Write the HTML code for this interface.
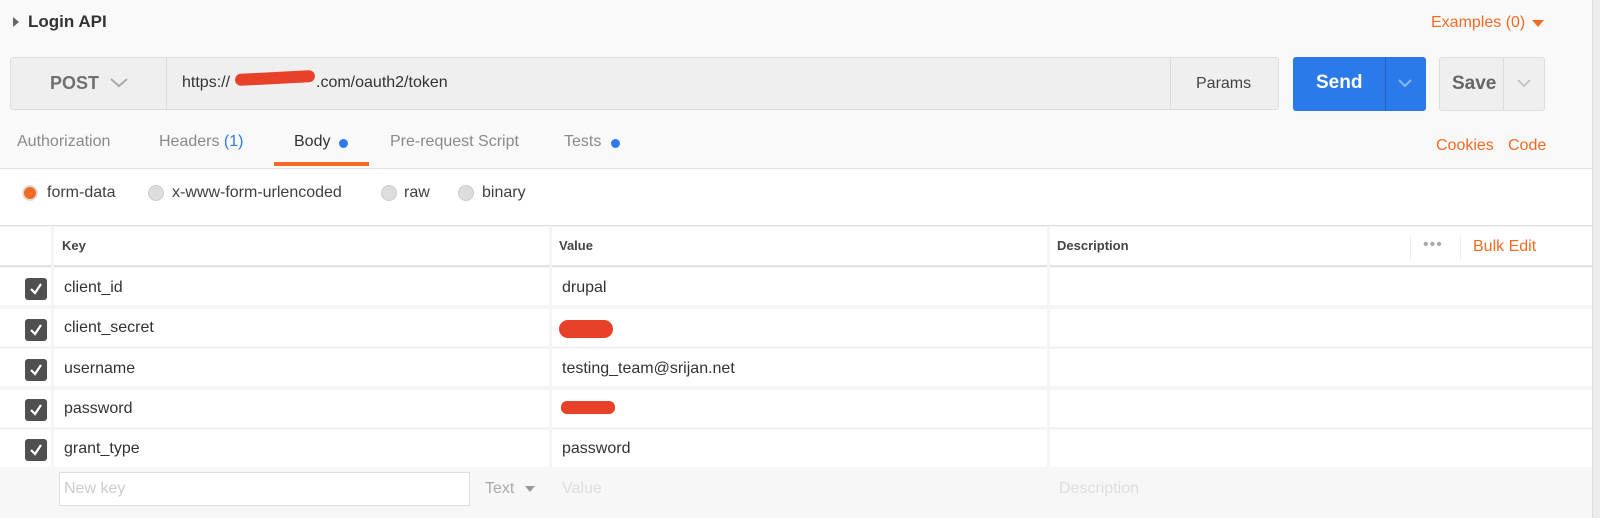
<!DOCTYPE html><html><head><style>
*{box-sizing:border-box;margin:0;padding:0}
body{width:1600px;height:518px;overflow:hidden;background:#f9f9f9;font-family:"Liberation Sans",sans-serif;position:relative;color:#505050}
.a{position:absolute}
.or{color:#f26b24}
.tab{position:absolute;top:133px;font-size:16px;color:#8a8a8a}
.radio{position:absolute;top:185px;width:16px;height:16px;border-radius:50%;background:#ddd;border:1px solid #ccc}
.rl{position:absolute;top:184px;font-size:16px;color:#404040}
.row{position:absolute;left:0;width:1592px;height:37px;background:#fff}
.cb{position:absolute;left:25px;width:22px;height:22px;background:#505050;border-radius:3px}
.cell{position:absolute;font-size:16px;color:#333}
.vs{position:absolute;top:227px;width:3px;height:240px;background:#f5f5f5}
</style></head><body>
<svg class="a" style="left:12px;top:16px" width="8" height="12"><path d="M1 1L7 6L1 11Z" fill="#666"/></svg>
<div class="a" style="left:28px;top:12px;font-size:17px;font-weight:bold;color:#333">Login API</div>
<div class="a or" style="left:1431px;top:14px;font-size:16px">Examples (0)</div>
<svg class="a" style="left:1532px;top:20px" width="12" height="8"><path d="M0 0H12L6 7Z" fill="#f26b24"/></svg>

<div class="a" style="left:10px;top:57px;width:1269px;height:53px;background:#efefef;border:1px solid #ddd;border-radius:3px"></div>
<div class="a" style="left:166px;top:58px;width:1px;height:51px;background:#ddd"></div>
<div class="a" style="left:1170px;top:58px;width:1px;height:51px;background:#ddd"></div>
<div class="a" style="left:50px;top:73px;font-size:18px;font-weight:bold;color:#707070">POST</div>
<svg class="a" style="left:110px;top:78px" width="18" height="10"><path d="M1 1L9 8L17 1" stroke="#aaa" stroke-width="2" fill="none"/></svg>
<div class="a" style="left:182px;top:74px;font-size:16px;color:#333">https://</div>
<div class="a" style="left:235px;top:72px;width:80px;height:12px;background:#e8412a;border-radius:6px;transform:rotate(-3deg)"></div>
<div class="a" style="left:236px;top:74px;font-size:16px;color:#333;padding-left:80px">.com/oauth2/token</div>
<div class="a" style="left:1196px;top:75px;font-size:16px;color:#444">Params</div>

<div class="a" style="left:1293px;top:57px;width:133px;height:54px;background:#2a7ae9;border-radius:3px"></div>
<div class="a" style="left:1385px;top:57px;width:1px;height:54px;background:#1f62c5"></div>
<div class="a" style="left:1316px;top:72px;font-size:19px;font-weight:bold;color:#fff">Send</div>
<svg class="a" style="left:1398px;top:79px" width="14" height="9"><path d="M1 1L7 7L13 1" stroke="#8db8f2" stroke-width="2" fill="none"/></svg>
<div class="a" style="left:1439px;top:57px;width:106px;height:54px;background:#efefef;border:1px solid #ddd;border-radius:3px"></div>
<div class="a" style="left:1503px;top:58px;width:1px;height:52px;background:#ddd"></div>
<div class="a" style="left:1452px;top:73px;font-size:19px;font-weight:bold;color:#666">Save</div>
<svg class="a" style="left:1517px;top:79px" width="14" height="9"><path d="M1 1L7 7L13 1" stroke="#bbb" stroke-width="1.5" fill="none"/></svg>

<div class="tab" style="left:17px">Authorization</div>
<div class="tab" style="left:159px">Headers <span style="color:#2a7ae9">(1)</span></div>
<div class="tab" style="left:294px;color:#333">Body</div>
<div class="a" style="left:339px;top:139px;width:9px;height:9px;border-radius:50%;background:#2a7ae9"></div>
<div class="tab" style="left:390px">Pre-request Script</div>
<div class="tab" style="left:564px">Tests</div>
<div class="a" style="left:611px;top:139px;width:9px;height:9px;border-radius:50%;background:#2a7ae9"></div>
<div class="a" style="left:274px;top:162px;width:95px;height:4px;background:#f26b24"></div>
<div class="a or" style="left:1436px;top:137px;font-size:16px">Cookies</div>
<div class="a or" style="left:1508px;top:137px;font-size:16px">Code</div>

<div class="a" style="left:0;top:168px;width:1592px;height:350px;background:#fff;border-top:1px solid #e2e2e2"></div>
<div class="a" style="left:1592px;top:0;width:8px;height:518px;background:#ececec;border-left:1px solid #ddd"></div>
<div class="radio" style="left:22px;background:#f26b24;border:2px solid #ddd"></div>
<div class="rl" style="left:47px">form-data</div>
<div class="radio" style="left:148px"></div>
<div class="rl" style="left:172px">x-www-form-urlencoded</div>
<div class="radio" style="left:381px"></div>
<div class="rl" style="left:404px">raw</div>
<div class="radio" style="left:458px"></div>
<div class="rl" style="left:482px">binary</div>

<div class="a" style="left:0;top:225px;width:1592px;height:242px;background:#f5f5f5;border-top:1px solid #ddd"></div>
<div class="row" style="top:227px;height:38px"></div>
<div class="a" style="left:0;top:265px;width:1592px;height:2px;background:#e2e2e2"></div>
<div class="row" style="top:268px"></div>
<div class="row" style="top:309px"></div>
<div class="row" style="top:349px"></div>
<div class="row" style="top:390px"></div>
<div class="row" style="top:430px"></div>
<div class="vs" style="left:51px"></div>
<div class="vs" style="left:549px"></div>
<div class="vs" style="left:1047px"></div>
<div class="a" style="left:1410px;top:235px;width:1px;height:25px;background:#eee"></div>
<div class="a" style="left:1460px;top:235px;width:1px;height:25px;background:#eee"></div>
<div class="cell" style="left:62px;top:238px;font-size:13px;font-weight:bold;color:#444">Key</div>
<div class="cell" style="left:559px;top:238px;font-size:13px;font-weight:bold;color:#444">Value</div>
<div class="cell" style="left:1057px;top:238px;font-size:13px;font-weight:bold;color:#444">Description</div>
<div class="cell" style="left:1423px;top:236px;color:#aaa;letter-spacing:1px">•••</div>
<div class="cell or" style="left:1473px;top:238px;font-size:16px;color:#f26b24">Bulk Edit</div>

<div class="cb" style="top:278px"></div><div class="cb" style="top:319px"></div><div class="cb" style="top:359px"></div><div class="cb" style="top:399px"></div><div class="cb" style="top:439px"></div>
<svg class="a" style="left:25px;top:278px" width="22" height="190"><g stroke="#fff" stroke-width="2.2" fill="none"><path d="M6 11L10 15L16 6"/><path d="M6 52L10 56L16 47"/><path d="M6 92L10 96L16 87"/><path d="M6 132L10 136L16 127"/><path d="M6 172L10 176L16 167"/></g></svg>

<div class="cell" style="left:64px;top:279px">client_id</div>
<div class="cell" style="left:64px;top:319px">client_secret</div>
<div class="cell" style="left:64px;top:360px">username</div>
<div class="cell" style="left:64px;top:400px">password</div>
<div class="cell" style="left:64px;top:440px">grant_type</div>
<div class="cell" style="left:562px;top:279px">drupal</div>
<div class="a" style="left:559px;top:320px;width:54px;height:18px;background:#e8412a;border-radius:9px"></div>
<div class="cell" style="left:562px;top:360px">testing_team@srijan.net</div>
<div class="a" style="left:561px;top:401px;width:54px;height:13px;background:#e8412a;border-radius:6px"></div>
<div class="cell" style="left:562px;top:440px">password</div>

<div class="a" style="left:0;top:467px;width:1592px;height:51px;background:#f7f7f7"></div>
<div class="a" style="left:59px;top:472px;width:411px;height:34px;background:#fff;border:1px solid #ddd"></div>
<div class="cell" style="left:64px;top:480px;color:#ccc">New key</div>
<div class="cell" style="left:485px;top:480px;color:#aaa">Text</div>
<svg class="a" style="left:525px;top:486px" width="10" height="7"><path d="M0 0H10L5 6Z" fill="#999"/></svg>
<div class="cell" style="left:562px;top:480px;color:#ddd">Value</div>
<div class="cell" style="left:1059px;top:480px;color:#ddd">Description</div>
</body></html>
